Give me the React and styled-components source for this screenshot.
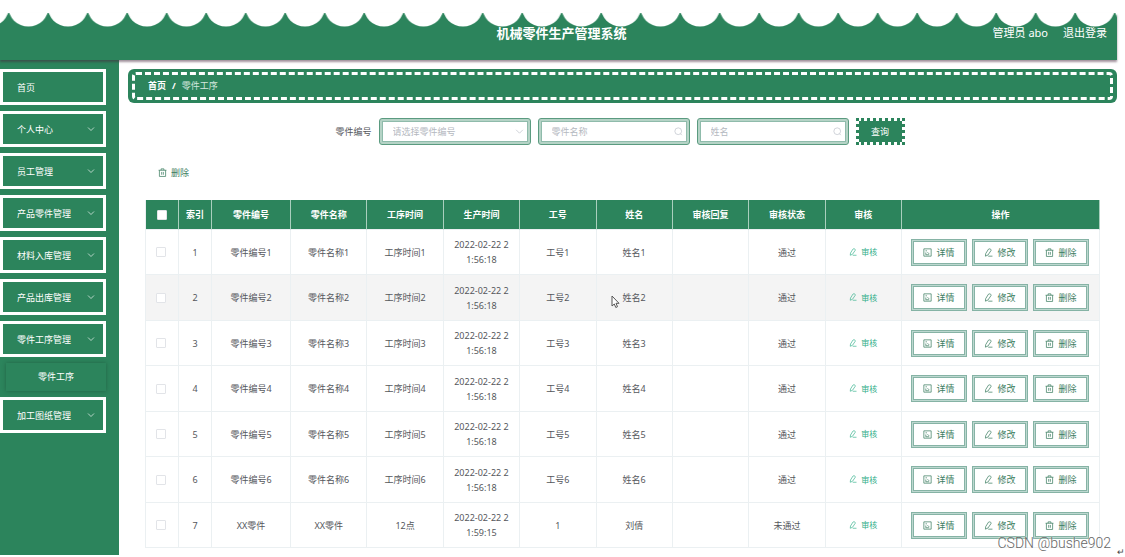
import React, { useState } from 'react';
import styled, { createGlobalStyle } from 'styled-components';

const GREEN = '#2c845c';

const GlobalStyle = createGlobalStyle`
  * {
    box-sizing: border-box;
  }

  body {
    margin: 0;
    background: #fff;
    font-family: 'Noto Sans', 'Noto Sans CJK SC', sans-serif;
    font-size: 9px;
    color: #55575c;
  }

  button,
  input,
  select {
    font-family: inherit;
    font-size: inherit;
  }
`;

const Page = styled.div`
  position: relative;
  display: flex;
  flex-direction: column;
  min-height: 100vh;
  padding: 13px 8px 2px 0;
`;

const Header = styled.header`
  position: relative;
  z-index: 1;
  display: grid;
  grid-template-columns: 1fr auto 1fr;
  align-items: center;
  height: 47px;
  padding: 0 10px 7px 16px;
  background: ${GREEN};
  color: #fff;
  box-shadow: 0 2px 2px rgba(70, 40, 60, 0.5);
`;

const Scallops = styled.svg`
  position: absolute;
  top: 0;
  left: 0;
  width: 100%;
  height: 14px;
`;

const Title = styled.h1`
  position: relative;
  grid-column: 2;
  margin: 0;
  font-size: 13px;
  line-height: 20px;
`;

const UserBox = styled.div`
  position: relative;
  justify-self: end;
  display: flex;
  gap: 15px;
  font-size: 11px;
  line-height: 20px;

  a {
    color: #fff;
    text-decoration: none;
  }
`;

const Body = styled.div`
  flex: 1;
  display: flex;
`;

const Sidebar = styled.nav`
  flex: 0 0 119px;
  padding: 9px 13px 0 0;
  background: ${GREEN};
`;

const MenuItem = styled.button`
  display: flex;
  align-items: center;
  justify-content: space-between;
  width: 100%;
  height: 36px;
  margin: 0 0 6px;
  padding: 0 8px 0 14px;
  border: 3px solid #fff;
  background: ${GREEN};
  color: #fff;
  cursor: pointer;
`;

const SubItem = styled.a`
  display: block;
  margin: 0 0 6px 6px;
  line-height: 28px;
  text-align: center;
  color: #fff;
  text-decoration: none;
  box-shadow: 0 0 4px rgba(0, 0, 0, 0.25);
`;

const Main = styled.main`
  flex: 1;
  min-width: 0;
  padding: 9px 0 0 9px;
`;

const BreadcrumbFrame = styled.div`
  padding: 3px 4px;
  border-radius: 6px;
  background: ${GREEN};
`;

const Breadcrumb = styled.div`
  display: flex;
  gap: 6px;
  padding: 0 13px;
  border: 3px dashed #fff;
  border-radius: 4px;
  line-height: 22px;
  color: #d5e8de;

  a {
    color: #fff;
    font-weight: bold;
    text-decoration: none;
  }

  b {
    color: #fff;
  }
`;

const SearchForm = styled.form`
  display: flex;
  justify-content: center;
  align-items: center;
  gap: 7px;
  padding: 15px 5px 0 0;
`;

const Field = styled.div`
  position: relative;
  width: 152px;

  input,
  select {
    display: block;
    width: 100%;
    height: 27px;
    padding: 0 18px 0 13px;
    border: 1px solid #5b9b80;
    border-radius: 3px;
    outline: none;
    appearance: none;
    background: #fff;
    box-shadow: inset 0 0 0 1px #b5d3c6, inset 0 0 0 2px #b5d3c6, inset 0 0 0 3px #8fbbab;
    color: #b4b8c0;
  }

  input::placeholder {
    color: #b4b8c0;
  }

  svg {
    position: absolute;
    top: 9px;
    right: 7px;
    color: #c0c4cc;
    pointer-events: none;
  }
`;

const QueryButton = styled.button`
  width: 49px;
  height: 27px;
  padding: 0;
  border: 3px dotted ${GREEN};
  background: ${GREEN};
  background-clip: padding-box;
  color: #fff;
  cursor: pointer;
`;

const Content = styled.section`
  padding: 20px 17px 0;
`;

const TextButton = styled.button`
  display: inline-flex;
  align-items: center;
  gap: 4px;
  padding: 0;
  border: 0;
  background: none;
  line-height: 15px;
  color: ${(props) => props.$color || '#3b7d60'};
  font-size: ${(props) => (props.$small ? '8px' : '9px')};
  cursor: pointer;
`;

const Toolbar = styled.div`
  padding: 0 13px 20px;
`;

const Table = styled.table`
  width: 100%;
  table-layout: fixed;
  border-collapse: separate;
  border-spacing: 0;
  border-left: 1px solid #ebf0f2;

  th,
  td {
    padding: 0 7px;
    border-right: 1px solid #ebf0f2;
    border-bottom: 1px solid #ebf0f2;
    line-height: 15px;
    text-align: center;
    word-break: break-all;
  }

  td:first-child {
    padding-right: 10px;
  }

  th {
    height: 30px;
    border-right-color: #a9cfbd;
    background: ${GREEN};
    color: #fff;
  }
`;

const Row = styled.tr`
  height: 45px;
  background: ${(props) => (props.$hover ? '#f4f4f4' : '#fff')};

  &:nth-child(even) {
    height: 46px;
  }
`;

const Checkbox = styled.input`
  display: block;
  width: 10px;
  height: 10px;
  margin: 0 auto;
  border: 1px solid #e2e4e8;
  border-radius: 1px;
  appearance: none;
  background: #fff;

  &:checked {
    background: #5b9b80;
  }
`;

const Actions = styled.div`
  display: flex;
  gap: 5px;
  padding-left: 2px;
`;

const ActionButton = styled.button`
  display: flex;
  align-items: center;
  justify-content: center;
  gap: 4px;
  width: 56px;
  height: 27px;
  padding: 0;
  border: 1px solid #86b3a5;
  background: #fff;
  box-shadow: inset 0 0 0 1px #bdd8d0, inset 0 0 0 2px #86b3a5;
  color: #3b7d60;
  cursor: pointer;
`;

const Pointer = styled.svg`
  position: absolute;
  top: 295px;
  left: 611px;
`;

const Watermark = styled.div`
  position: absolute;
  right: 14px;
  bottom: 4px;
  font-family: Roboto, 'Liberation Sans', sans-serif;
  font-size: 14px;
  font-weight: 300;
  line-height: 20px;
  color: #666;
  text-shadow: 0 0 2px #fff;
`;

const ReturnMark = styled.span`
  position: absolute;
  right: 0;
  bottom: 0;
  font-size: 9px;
  line-height: 10px;
  color: #444;
`;

// 图标
const icons = {
  down: <path d="M2 5l6 6 6-6" />,
  search: (
    <>
      <circle cx="7.5" cy="7.5" r="6" />
      <path d="M11.500 12l2.500 2.500" />
    </>
  ),
  trash: <path d="M1 4h14M5.500 4V1.500h5V4M2.500 4v11h11V4M6.500 7v5M9.500 7v5" />,
  edit: <path d="M9.500 1.500c2 0 3.500 1.200 3 3L7 12.500l-4.500 2 .5-4.500 5-8zM7.500 14.500H15" />,
  doc: <path d="M1.500 1.500h13v13h-13zM4.500 5H7M5 8v4h6M8 7.500l3 3" />,
};

function Icon({ name, size = 9 }) {
  return (
    <svg
      width={size}
      height={size}
      viewBox="0 0 16 16"
      fill="none"
      stroke="currentColor"
      strokeWidth="1.3"
      aria-hidden="true"
    >
      {icons[name]}
    </svg>
  );
}

const menus = [
  { name: '首页' },
  { name: '个人中心', arrow: true },
  { name: '员工管理', arrow: true },
  { name: '产品零件管理', arrow: true },
  { name: '材料入库管理', arrow: true },
  { name: '产品出库管理', arrow: true },
  { name: '零件工序管理', arrow: true, child: '零件工序' },
  { name: '加工图纸管理', arrow: true },
];

const columns = ['零件编号', '零件名称', '工序时间', '生产时间', '工号', '姓名', '审核回复', '审核状态', '审核'];

const rows = [1, 2, 3, 4, 5, 6].map((n) => ({
  id: n,
  cells: [`零件编号${n}`, `零件名称${n}`, `工序时间${n}`, '2022-02-22 21:56:18', `工号${n}`, `姓名${n}`, '', '通过'],
}));
rows.push({
  id: 7,
  cells: ['XX零件', 'XX零件', '12点', '2022-02-22 21:59:15', '1', '刘倩', '', '未通过'],
});

function App() {
  const [selected, setSelected] = useState([]);

  const toggle = (id) => {
    setSelected(selected.includes(id) ? selected.filter((s) => s !== id) : [...selected, id]);
  };

  const toggleAll = () => {
    setSelected(selected.length === rows.length ? [] : rows.map((row) => row.id));
  };

  return (
    <Page>
      <GlobalStyle />
      <Header>
        <Scallops aria-hidden="true">
          <defs>
            <pattern id="scallop" x="8.7" y="0" width="39.5" height="14" patternUnits="userSpaceOnUse">
              <circle cx="19.75" cy="-6.7" r="20.3" fill="#fff" />
            </pattern>
          </defs>
          <rect width="100%" height="14" fill="url(#scallop)" />
        </Scallops>
        <Title>机械零件生产管理系统</Title>
        <UserBox>
          <span>管理员 abo</span>
          <a href="#logout">退出登录</a>
        </UserBox>
      </Header>

      <Body>
        <Sidebar>
          {menus.map((menu) => (
            <React.Fragment key={menu.name}>
              <MenuItem type="button">
                {menu.name}
                {menu.arrow && <Icon name="down" size={8} />}
              </MenuItem>
              {menu.child && <SubItem href="#process">{menu.child}</SubItem>}
            </React.Fragment>
          ))}
        </Sidebar>

        <Main>
          <BreadcrumbFrame>
            <Breadcrumb>
              <a href="#home">首页</a>
              <b>/</b>
              <span>零件工序</span>
            </Breadcrumb>
          </BreadcrumbFrame>

          <SearchForm onSubmit={(e) => e.preventDefault()}>
            <label htmlFor="partNo">零件编号</label>
            <Field>
              <select id="partNo" defaultValue="">
                <option value="">请选择零件编号</option>
              </select>
              <Icon name="down" />
            </Field>
            <Field>
              <input type="text" placeholder="零件名称" aria-label="零件名称" />
              <Icon name="search" />
            </Field>
            <Field>
              <input type="text" placeholder="姓名" aria-label="姓名" />
              <Icon name="search" />
            </Field>
            <QueryButton type="submit">查询</QueryButton>
          </SearchForm>

          <Content>
            <Toolbar>
              <TextButton type="button">
                <Icon name="trash" />
                删除
              </TextButton>
            </Toolbar>

            <Table>
              <colgroup>
                <col width="33" />
                <col width="33" />
                <col width="79" />
                <col span="8" />
                <col width="198" />
              </colgroup>
              <thead>
                <tr>
                  <th>
                    <Checkbox
                      type="checkbox"
                      aria-label="全选"
                      checked={selected.length === rows.length}
                      onChange={toggleAll}
                    />
                  </th>
                  <th>索引</th>
                  {columns.map((column) => (
                    <th key={column}>{column}</th>
                  ))}
                  <th>操作</th>
                </tr>
              </thead>
              <tbody>
                {rows.map((row) => (
                  <Row key={row.id} $hover={row.id === 2}>
                    <td>
                      <Checkbox
                        type="checkbox"
                        aria-label={`选择${row.id}`}
                        checked={selected.includes(row.id)}
                        onChange={() => toggle(row.id)}
                      />
                    </td>
                    <td>{row.id}</td>
                    {row.cells.map((cell, i) => (
                      <td key={i}>{cell}</td>
                    ))}
                    <td>
                      <TextButton type="button" $color="#2fae88" $small>
                        <Icon name="edit" size={8} />
                        审核
                      </TextButton>
                    </td>
                    <td>
                      <Actions>
                        <ActionButton type="button">
                          <Icon name="doc" />
                          详情
                        </ActionButton>
                        <ActionButton type="button">
                          <Icon name="edit" />
                          修改
                        </ActionButton>
                        <ActionButton type="button">
                          <Icon name="trash" />
                          删除
                        </ActionButton>
                      </Actions>
                    </td>
                  </Row>
                ))}
              </tbody>
            </Table>
          </Content>
        </Main>
      </Body>

      <Pointer width="9" height="14" viewBox="0 0 9 14" aria-hidden="true">
        <path d="M1 1v10l2.300-2 1.500 3.500 1.700-.8L5 8.300h3z" fill="#fff" stroke="#555" strokeWidth="1" />
      </Pointer>
      <Watermark>CSDN @bushe902</Watermark>
      <ReturnMark>↵</ReturnMark>
    </Page>
  );
}

export default App;
